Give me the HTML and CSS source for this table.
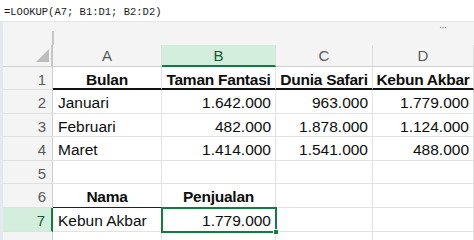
FILE: index.html
```html
<!DOCTYPE html>
<html>
<head>
<meta charset="utf-8">
<link rel="stylesheet" href="styles.css">
</head>
<body>
<div class="formula">=LOOKUP(A7; B1:D1; B2:D2)</div>
<div class="lower">
<div class="gap"><span class="vsep"></span><span class="dots">···</span></div>
<div class="sheet">
  <div class="corner"><span class="tri"></span></div>
  <div class="ch">A</div>
  <div class="ch sel">B</div>
  <div class="ch">C</div>
  <div class="ch">D</div>

  <div class="rh">1</div>
  <div class="c b ctr thick">Bulan</div>
  <div class="c b ctr thick">Taman Fantasi</div>
  <div class="c b ctr thick">Dunia Safari</div>
  <div class="c b ctr thick">Kebun Akbar</div>

  <div class="rh">2</div>
  <div class="c">Januari</div>
  <div class="c r">1.642.000</div>
  <div class="c r">963.000</div>
  <div class="c r">1.779.000</div>

  <div class="rh">3</div>
  <div class="c">Februari</div>
  <div class="c r">482.000</div>
  <div class="c r">1.878.000</div>
  <div class="c r">1.124.000</div>

  <div class="rh">4</div>
  <div class="c">Maret</div>
  <div class="c r">1.414.000</div>
  <div class="c r">1.541.000</div>
  <div class="c r">488.000</div>

  <div class="rh">5</div>
  <div class="c"></div>
  <div class="c"></div>
  <div class="c"></div>
  <div class="c"></div>

  <div class="rh">6</div>
  <div class="c b ctr dark">Nama</div>
  <div class="c b ctr dark">Penjualan</div>
  <div class="c"></div>
  <div class="c"></div>

  <div class="rh rsel">7</div>
  <div class="c">Kebun Akbar</div>
  <div class="c r active">1.779.000<span class="handle"></span></div>
  <div class="c"></div>
  <div class="c"></div>

  <div class="rh"></div>
  <div class="c"></div>
  <div class="c"></div>
  <div class="c"></div>
  <div class="c"></div>
</div>
</div>
</body>
</html>
```
FILE: styles.css
```css
* { box-sizing: border-box; }
html, body { margin: 0; padding: 0; }
body {
  width: 474px;
  height: 240px;
  overflow: hidden;
  background: #f4f4f4;
  font-family: "Liberation Sans", Arial, sans-serif;
}
.formula {
  height: 22px;
  background: #fff;
  font-family: "Liberation Mono", monospace;
  font-size: 10.5px;
  line-height: 25px;
  padding-left: 4px;
  color: #1a1a1a;
  border-bottom: 1px solid #e6e6e6;
}
.lower {
  border-left: 3px solid #e4e9ef;
}
.gap {
  height: 23px;
  position: relative;
  background: #f4f4f4;
}
.vsep {
  position: absolute;
  left: 49px;
  top: 9px;
  bottom: 0;
  width: 2px;
  background: #c6c6c6;
}
.dots {
  position: absolute;
  left: 436px;
  top: 1px;
  font-size: 10px;
  line-height: 10px;
  color: #777;
  letter-spacing: -1px;
}
.sheet {
  display: grid;
  grid-template-columns: 50px 109px 114px 97px 101px;
  grid-template-rows: 22px 23px 24px 23px 24px 23px 24px 24px 20px;
  background: #fff;
}
.corner {
  background: #f4f4f4;
  border-right: 2px solid #c6c6c6;
  border-bottom: 1px solid #cfcfcf;
  position: relative;
}
.tri {
  position: absolute;
  right: 2px;
  bottom: 4px;
  width: 0; height: 0;
  border-left: 13px solid transparent;
  border-bottom: 13px solid #bdbdbd;
}
.ch {
  background: #f4f4f4;
  color: #5a5a5a;
  font-size: 15px;
  text-align: center;
  line-height: 22px;
  border-right: 1px solid #dddddd;
  border-bottom: 1px solid #cfcfcf;
}
.ch.sel {
  background: #d3eedc;
  color: #0e5c2f;
  border-bottom: 2px solid #107c41;
}
.rh {
  background: #f4f4f4;
  color: #5a5a5a;
  font-size: 15px;
  text-align: right;
  padding-right: 6px;
  padding-top: 1px;
  line-height: 24px;
  border-right: 1px solid #cfcfcf;
  border-bottom: 1px solid #e0e0e0;
}
.rh.rsel {
  background: #d3eedc;
  color: #0e5c2f;
  border-right: 2px solid #107c41;
}
.c {
  font-size: 15.5px;
  color: #0d0d0d;
  line-height: 24px;
  padding: 1px 4px 0 5px;
  white-space: nowrap;
  border-right: 1px solid #e2e2e2;
  border-bottom: 1px solid #e2e2e2;
  position: relative;
}
.c.r { text-align: right; }
.c.ctr { text-align: center; padding: 1px 0 0 0; }
.c.b { font-weight: bold; letter-spacing: -0.25px; }
.c.thick { border-bottom: 2px solid #111; }
.c.dark { border-bottom: 1px solid #222; }
.c.active {
  outline: 2px solid #107c41;
  outline-offset: -1px;
  z-index: 2;
}
.handle {
  position: absolute;
  right: -4px;
  bottom: -4px;
  width: 6px;
  height: 6px;
  background: #107c41;
  border: 1px solid #fff;
}
```
